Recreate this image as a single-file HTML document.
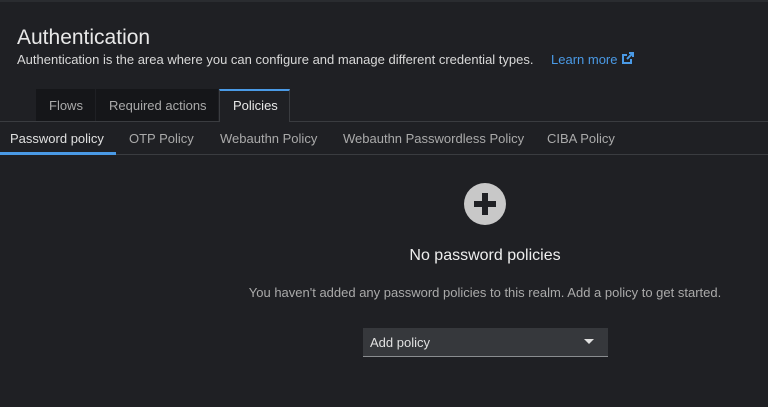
<!DOCTYPE html><html><head><style>
body{margin:0;width:768px;height:407px;background:#1f2024;font-family:"Liberation Sans",sans-serif;overflow:hidden;position:relative;color:#ccc}
.a{position:absolute;white-space:nowrap}
</style></head><body>
<div class="a" style="left:0;top:0;width:768px;height:2px;background:#2a2c30"></div>
<div class="a" style="left:17px;top:26px;font-size:21px;color:#e8e8e8">Authentication</div>
<div class="a" style="left:17px;top:52px;font-size:13px;color:#d8d8d8">Authentication is the area where you can configure and manage different credential types.</div>
<div class="a" style="left:551px;top:52px;font-size:13px;color:#4a9ae6">Learn more <svg width="13" height="13" viewBox="0 0 13 13" style="vertical-align:-1px"><path d="M10 7v4H2V3h4" fill="none" stroke="#4a9ae6" stroke-width="2"/><path d="M6 7l6-6M8 1h4v4" fill="none" stroke="#4a9ae6" stroke-width="2"/></svg></div>
<div class="a" style="left:0;top:121px;width:768px;height:1px;background:#3a3c40"></div>
<div class="a" style="left:36px;top:89px;width:59px;height:32px;background:#151619"></div>
<div class="a" style="left:96px;top:89px;width:122px;height:32px;background:#151619"></div>
<div class="a" style="left:219px;top:89px;width:71px;height:33px;background:#1f2024;border-top:2px solid #4a9ae6;box-sizing:border-box;border-left:1px solid #3a3c40;border-right:1px solid #3a3c40"></div>
<div class="a" style="left:49px;top:98px;font-size:13px;color:#aaa">Flows</div>
<div class="a" style="left:109px;top:98px;font-size:13px;color:#aaa">Required actions</div>
<div class="a" style="left:233px;top:98px;font-size:13px;color:#e8e8e8">Policies</div>
<div class="a" style="left:0;top:154px;width:768px;height:1px;background:#3a3c40"></div>
<div class="a" style="left:0;top:152px;width:116px;height:3px;background:#4a9ae6"></div>
<div class="a" style="left:10px;top:131px;font-size:13px;color:#e0e0e0">Password policy</div>
<div class="a" style="left:129px;top:131px;font-size:13px;color:#aaa">OTP Policy</div>
<div class="a" style="left:220px;top:131px;font-size:13px;color:#aaa">Webauthn Policy</div>
<div class="a" style="left:343px;top:131px;font-size:13px;color:#aaa">Webauthn Passwordless Policy</div>
<div class="a" style="left:547px;top:131px;font-size:13px;color:#aaa">CIBA Policy</div>
<svg class="a" style="left:463px;top:182px" width="44" height="44" viewBox="0 0 44 44"><circle cx="22" cy="22" r="21" fill="#c8c8c8"/><path d="M22 11v22M11 22h22" stroke="#1f2024" stroke-width="6"/></svg>
<div class="a" style="left:0;width:970px;top:247px;text-align:center;font-size:16px;color:#eee">No password policies</div>
<div class="a" style="left:0;width:970px;top:285px;text-align:center;font-size:13px;color:#aaa">You haven't added any password policies to this realm. Add a policy to get started.</div>
<div class="a" style="left:363px;top:328px;width:245px;height:29px;background:#36383c;border-bottom:1px solid #8a8d90;box-sizing:border-box"></div>
<div class="a" style="left:370px;top:335px;font-size:13px;color:#e0e0e0">Add policy</div>
<svg class="a" style="left:584px;top:339px" width="10" height="6"><path d="M0 0h10L5 5z" fill="#e0e0e0"/></svg>
</body></html>
